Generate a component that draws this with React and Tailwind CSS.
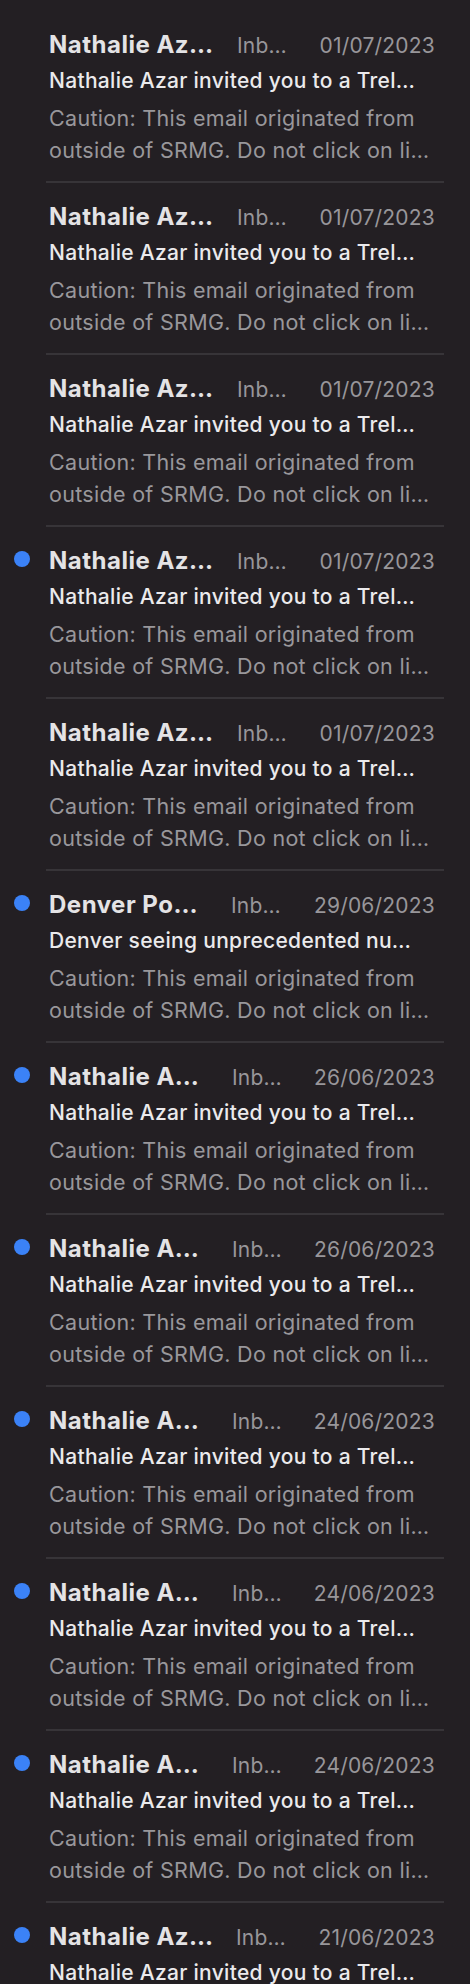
const mails = [
  { from: 'Nathalie Az…', w: 'w-[188px]', date: '01/07/2023', subject: 'Nathalie Azar invited you to a Trel…', unread: false },
  { from: 'Nathalie Az…', w: 'w-[188px]', date: '01/07/2023', subject: 'Nathalie Azar invited you to a Trel…', unread: false },
  { from: 'Nathalie Az…', w: 'w-[188px]', date: '01/07/2023', subject: 'Nathalie Azar invited you to a Trel…', unread: false },
  { from: 'Nathalie Az…', w: 'w-[188px]', date: '01/07/2023', subject: 'Nathalie Azar invited you to a Trel…', unread: true },
  { from: 'Nathalie Az…', w: 'w-[188px]', date: '01/07/2023', subject: 'Nathalie Azar invited you to a Trel…', unread: false },
  { from: 'Denver Po…', w: 'w-[182px]', date: '29/06/2023', subject: 'Denver seeing unprecedented nu…', unread: true },
  { from: 'Nathalie A…', w: 'w-[183px]', date: '26/06/2023', subject: 'Nathalie Azar invited you to a Trel…', unread: true },
  { from: 'Nathalie A…', w: 'w-[183px]', date: '26/06/2023', subject: 'Nathalie Azar invited you to a Trel…', unread: true },
  { from: 'Nathalie A…', w: 'w-[183px]', date: '24/06/2023', subject: 'Nathalie Azar invited you to a Trel…', unread: true },
  { from: 'Nathalie A…', w: 'w-[183px]', date: '24/06/2023', subject: 'Nathalie Azar invited you to a Trel…', unread: true },
  { from: 'Nathalie A…', w: 'w-[183px]', date: '24/06/2023', subject: 'Nathalie Azar invited you to a Trel…', unread: true },
  { from: 'Nathalie Az…', w: 'w-[187px]', date: '21/06/2023', subject: 'Nathalie Azar invited you to a Trel…', unread: true },
]

function MailRow({ mail }) {
  return (
    <div className="flex">
      <div className="w-[46px] shrink-0">
        {mail.unread && <div className="ml-[14px] mt-[24px] size-4 rounded-full bg-[#3b82f7]" />}
      </div>
      <div className="w-[398px] shrink-0 border-b-2 border-[#373438] pl-[3px] pr-[9px] pt-[19px] pb-[15px]">
        <div className="flex h-[30px] items-baseline whitespace-nowrap">
          <span className={`${mail.w} shrink-0 text-[24px] font-bold leading-[30px] tracking-[0.5px] text-[#e4e3e5]`}>{mail.from}</span>
          <span className="text-[21px] leading-[30px] tracking-[0.2px] text-[#98969a]">Inb…</span>
          <span className="ml-auto text-[21px] leading-[30px] tracking-[0.2px] text-[#98969a]">{mail.date}</span>
        </div>
        <div className="mt-[8px] whitespace-nowrap text-[21px] font-medium leading-[26px] tracking-[0.3px] text-[#ebeaec]">{mail.subject}</div>
        <div className="mt-[8px] whitespace-nowrap text-[21.5px] leading-[32px] tracking-[0.3px] text-[#99979b]">
          <div>Caution: This email originated from</div>
          <div>outside of SRMG. Do not click on li…</div>
        </div>
      </div>
    </div>
  )
}

export default function App() {
  return (
    <div className="h-[1984px] w-[470px] overflow-hidden bg-[#231f23] pt-[11px] font-['Inter',sans-serif] antialiased">
      {mails.map((m, i) => <MailRow key={i} mail={m} />)}
    </div>
  )
}
